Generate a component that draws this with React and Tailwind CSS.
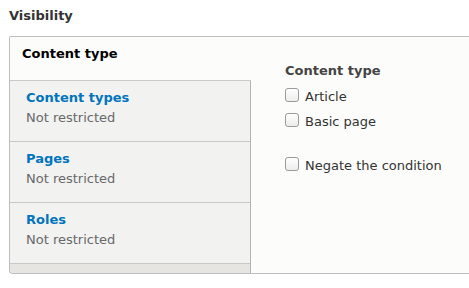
const tabs = [
  { title: "Content types", summary: "Not restricted" },
  { title: "Pages", summary: "Not restricted" },
  { title: "Roles", summary: "Not restricted" },
];

function Checkbox({ label, className = "" }) {
  return (
    <label className={`flex items-start gap-[6px] h-[25px] ${className}`}>
      <span className="mt-[1px] w-[14px] h-[14px] shrink-0 rounded-[3px] border border-[#9b9b9b] bg-gradient-to-b from-white to-[#ededed]" />
      <span className="leading-[20px] text-[#333]">{label}</span>
    </label>
  );
}

export default function App() {
  return (
    <div className="w-[469px] h-[288px] overflow-hidden bg-white font-['DejaVu_Sans',sans-serif] text-[13px]">
      <div className="pt-[7px] pl-[9px] font-bold leading-[18px] text-[#333]">Visibility</div>

      <div className="mt-[11px] ml-[9px] flex h-[238px] border border-r-0 border-[#bdbdbd] rounded-tl-[2px] rounded-bl-[4px]">
        <ul className="w-[241px] shrink-0 flex flex-col bg-[#e6e5e1] border-r border-[#b3b3b3] rounded-bl-[4px]">
          <li className="relative -mr-px h-[44px] shrink-0 bg-[#fcfcfa] border-b border-[#cacaca] pl-[12px] pt-[7px]">
            <span className="block font-bold leading-[20px] text-black">Content type</span>
          </li>
          {tabs.map((tab) => (
            <li
              key={tab.title}
              className="h-[61px] shrink-0 bg-[#f2f2f0] border-b border-[#c8c8c8] pl-4 pt-[7px]"
            >
              <span className="block font-bold leading-[20px] text-[#0074bd]">{tab.title}</span>
              <span className="block leading-[20px] text-[#68696b]">{tab.summary}</span>
            </li>
          ))}
        </ul>

        <div className="flex-1 bg-[#fcfcfa] pl-[34px] pt-[24px]">
          <div className="font-bold leading-[20px] text-[#444]">Content type</div>
          <div className="mt-[6px]">
            <Checkbox label="Article" />
            <Checkbox label="Basic page" />
          </div>
          <Checkbox label="Negate the condition" className="mt-[19px]" />
        </div>
      </div>
    </div>
  );
}
